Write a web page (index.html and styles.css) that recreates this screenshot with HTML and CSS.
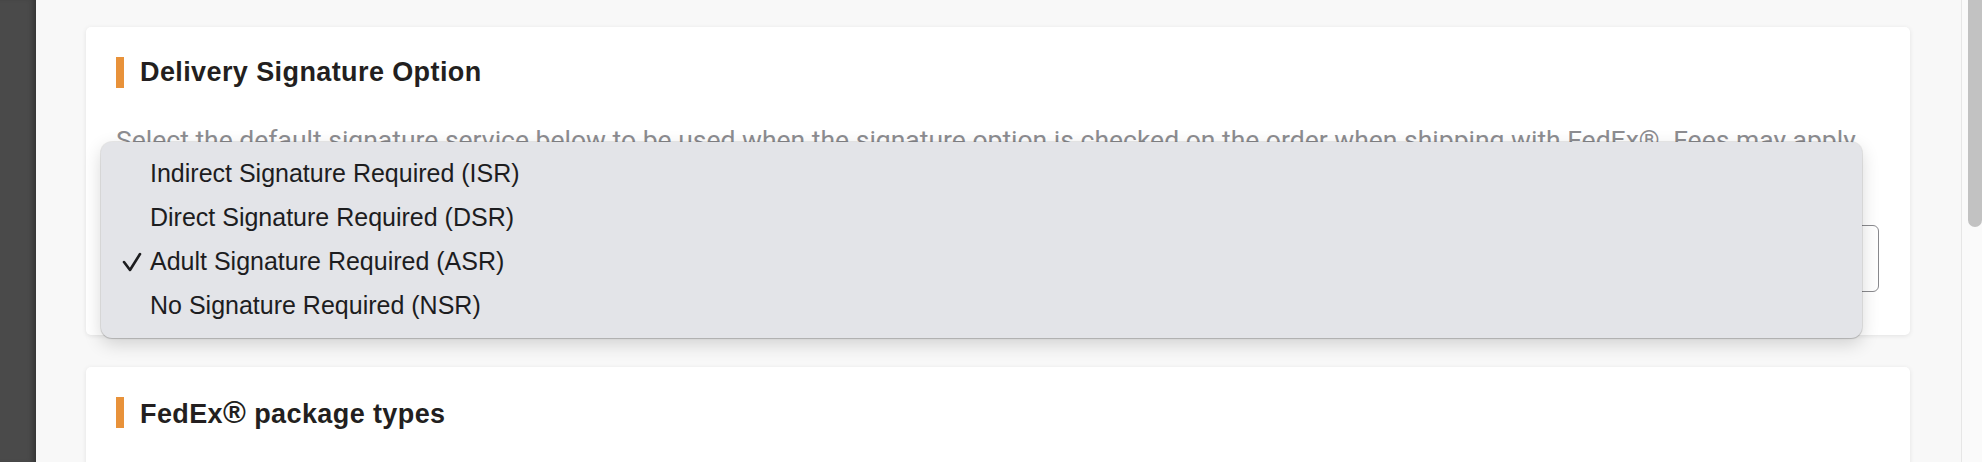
FILE: index.html
```html
<!DOCTYPE html>
<html lang="en">
<head>
    <meta charset="UTF-8">
    <title>FedEx settings</title>
    <link rel="stylesheet" href="styles.css">
</head>
<body>
    <div class="sidebar"></div>

    <div class="main">
        <div class="card">
            <div class="card-title">
                <span class="bar"></span>
                <span>Delivery Signature Option</span>
            </div>
            <p class="desc">Select the default signature service below to be used when the signature option is checked on the order when shipping with FedEx®. Fees may apply.</p>
            <div class="select"></div>

            <ul class="dropdown">
                <li>Indirect Signature Required (ISR)</li>
                <li>Direct Signature Required (DSR)</li>
                <li class="checked">
                    <svg class="check" width="20" height="20" viewBox="0 0 20 20">
                        <path d="M2 10 L8 18 L18 2" fill="none" stroke="#1d1d1f" stroke-width="2.6" stroke-linecap="round" stroke-linejoin="round"/>
                    </svg>
                    Adult Signature Required (ASR)
                </li>
                <li>No Signature Required (NSR)</li>
            </ul>
        </div>

        <div class="card">
            <div class="card-title">
                <span class="bar"></span>
                <span>FedEx<span class="reg">®</span> package types</span>
            </div>
        </div>
    </div>

    <div class="scrollbar">
        <div class="thumb"></div>
    </div>
</body>
</html>
```

FILE: styles.css
```css
body {
    margin: 0;
    padding: 0;
    display: flex;
    height: 100vh;
    overflow: hidden;
    background: #f8f8f8;
    font-family: "Liberation Sans", Arial, sans-serif;
}
.sidebar {
    width: 36px;
    flex-shrink: 0;
    background: #4a4a4a;
    box-shadow: inset -6px 0 6px -4px rgba(0, 0, 0, 0.35);
}
.main {
    flex: 1;
    padding: 27px 51px 0 50px;
    display: flex;
    flex-direction: column;
    gap: 32px;
}
.card {
    position: relative;
    flex-shrink: 0;
    background: white;
    border-radius: 5px;
    box-shadow: 0px 1px 5px rgba(0, 0, 0, 0.09);
    padding: 30px 31px 43px 30px;
}
.card-title {
    display: flex;
    align-items: center;
    gap: 16px;
    height: 31px;
    font-size: 27px;
    font-weight: bold;
    letter-spacing: 0.4px;
    color: #231f20;
}
.card-title .bar {
    width: 8px;
    height: 31px;
    background: #e8923a;
}
.card-title .reg {
    font-size: 31px;
}
.desc {
    margin: 36px 0 0 0;
    font-family: Roboto, sans-serif;
    font-size: 26.5px;
    color: #8d8d91;
    white-space: nowrap;
}
.select {
    margin-top: 70px;
    height: 65px;
    border: 1.5px solid #8a8a8e;
    border-radius: 6px;
}
.dropdown {
    position: absolute;
    top: 115px;
    left: 15px;
    right: 48px;
    margin: 0;
    padding: 9px 0 11px 49px;
    list-style: none;
    background: #e3e4e8;
    border-radius: 11px;
    box-shadow: 0px 0px 0px 1px rgba(0, 0, 0, 0.08), 0px 1px 1px rgba(0, 0, 0, 0.12), 0px 6px 18px rgba(0, 0, 0, 0.16);
    font-size: 25px;
    color: #1d1d1f;
}
.dropdown li {
    position: relative;
    height: 44px;
    line-height: 44px;
}
.dropdown .check {
    position: absolute;
    left: -28px;
    top: 13px;
}
.scrollbar {
    width: 20px;
    flex-shrink: 0;
    background: #fafafa;
    border-left: 1px solid #e6e6e6;
    position: relative;
}
.scrollbar .thumb {
    margin-left: 6px;
    width: 14px;
    height: 227px;
    background: #c2c2c2;
    border-radius: 0 0 7px 7px;
}
```
